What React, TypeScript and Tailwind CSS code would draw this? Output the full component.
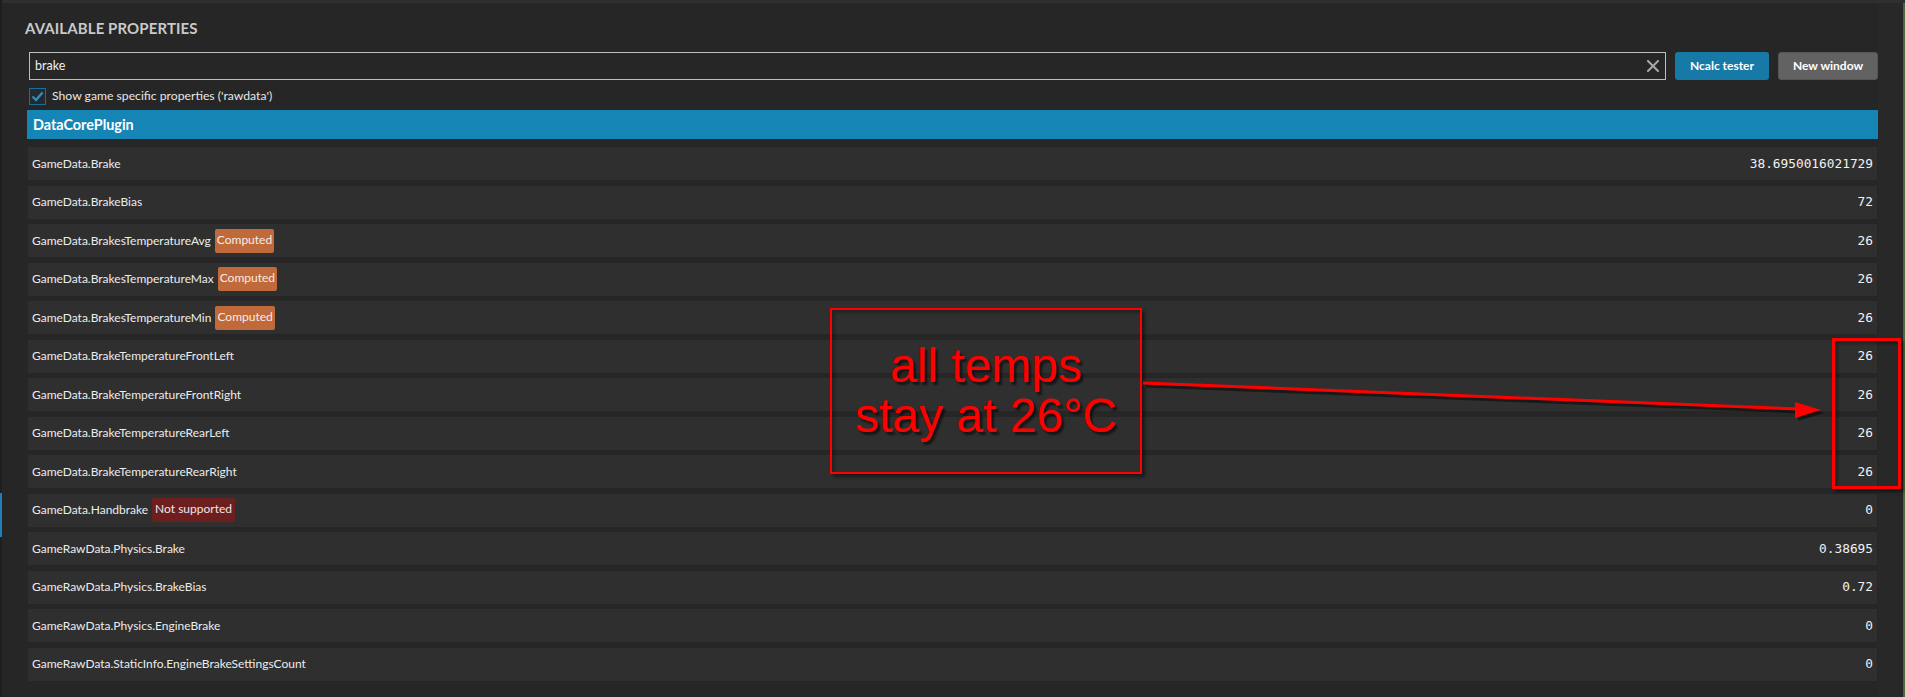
import React from "react";

type Row = { name: string; value: string; badge?: "computed" | "ns" };

const rows: Row[] = [
  { name: "GameData.Brake", value: "38.6950016021729" },
  { name: "GameData.BrakeBias", value: "72" },
  { name: "GameData.BrakesTemperatureAvg", value: "26", badge: "computed" },
  { name: "GameData.BrakesTemperatureMax", value: "26", badge: "computed" },
  { name: "GameData.BrakesTemperatureMin", value: "26", badge: "computed" },
  { name: "GameData.BrakeTemperatureFrontLeft", value: "26" },
  { name: "GameData.BrakeTemperatureFrontRight", value: "26" },
  { name: "GameData.BrakeTemperatureRearLeft", value: "26" },
  { name: "GameData.BrakeTemperatureRearRight", value: "26" },
  { name: "GameData.Handbrake", value: "0", badge: "ns" },
  { name: "GameRawData.Physics.Brake", value: "0.38695" },
  { name: "GameRawData.Physics.BrakeBias", value: "0.72" },
  { name: "GameRawData.Physics.EngineBrake", value: "0" },
  { name: "GameRawData.StaticInfo.EngineBrakeSettingsCount", value: "0" },
];

const sans = { fontFamily: "Lato, 'Open Sans', sans-serif" };

export default function App() {
  return (
    <div className="relative w-[1905px] h-[697px] overflow-hidden bg-[#262626] flex" style={sans}>
      {/* left strip */}
      <div className="w-[2px] h-full shrink-0 bg-[#1e1e1e] flex flex-col">
        <div className="h-[493px]" />
        <div className="h-[44px] bg-[#1f7fb8]" />
      </div>

      <div className="flex-1 flex flex-col">
        <div className="h-[3px] bg-[#2f2f2f]" />
        <div className="flex-1 flex">
          {/* main */}
          <div className="w-[1876px] shrink-0 pl-[23px] flex flex-col">
            <div className="pt-[15px] leading-[20px] text-[15px] font-bold text-[#c9c9c9] tracking-[0.1px]">
              AVAILABLE PROPERTIES
            </div>

            <div className="mt-[14px] ml-[4px] flex items-center gap-[9px] h-[28px]">
              <div className="flex-1 h-[28px] border border-[#bdbdbd] bg-[#262626] flex items-center pl-[5px] pr-[5px]">
                <span className="flex-1 text-[12.5px] text-[#f0f0f0]">brake</span>
                <svg width="12" height="12" viewBox="0 0 12 12" className="mr-[1px]">
                  <path d="M1 1 L11 11 M11 1 L1 11" stroke="#a8a8a8" strokeWidth="2" strokeLinecap="square" />
                </svg>
              </div>
              <button className="w-[94px] h-[28px] rounded-[3px] bg-[#177aa6] text-white text-[12px] font-bold">
                Ncalc tester
              </button>
              <button className="w-[100px] h-[28px] rounded-[3px] bg-[#626262] border border-[#555] text-white text-[12px] font-bold">
                New window
              </button>
            </div>

            <div className="mt-[8px] ml-[4px] flex items-center h-[17px] gap-[6px]">
              <div className="w-[17px] h-[17px] border border-[#1b6e99] bg-[#252a2e] flex items-center justify-center">
                <svg width="13" height="11" viewBox="0 0 13 11">
                  <path d="M1.5 5.5 L5 9 L11.5 1.5" stroke="#2f8cc4" strokeWidth="2.4" fill="none" />
                </svg>
              </div>
              <span className="text-[12.2px] text-[#e6e6e6]">Show game specific properties ('rawdata')</span>
            </div>

            <div className="mt-[5px] ml-[2px] h-[29px] bg-[#1585b5] flex items-center pl-[6px] text-[14.4px] font-bold text-white">
              DataCorePlugin
            </div>

            <div className="mt-[8px] ml-[3px] mr-[1px] flex flex-col gap-[5.5px]">
              {rows.map((r) => (
                <div key={r.name} className="h-[33px] bg-[#2f2f2f] flex items-center pl-[4px] pr-[4px]">
                  <span className="text-[12px] text-[#ececec]">{r.name}</span>
                  {r.badge === "computed" && (
                    <span className="ml-[4px] h-[24px] px-[2px] pt-[2px] rounded-[2px] bg-[#c0693a] text-[12px] text-[#f5ece4] leading-[18px]">
                      Computed
                    </span>
                  )}
                  {r.badge === "ns" && (
                    <span className="ml-[4px] h-[24px] px-[3px] pt-[2px] rounded-[2px] bg-[#6d1f1f] text-[12px] text-[#f0e4e4] leading-[18px]">
                      Not supported
                    </span>
                  )}
                  <span
                    className="ml-auto text-[13px] text-[#f2f2f2]"
                    style={{ fontFamily: "'DejaVu Sans Mono', 'Liberation Mono', monospace", fontSize: "12.8px" }}
                  >
                    {r.value}
                  </span>
                </div>
              ))}
            </div>
          </div>
          {/* right gutter */}
          <div className="flex-1 bg-[#282828]" />
          <div className="w-[1px] bg-[#1c6c9a]" />
          <div className="w-[1px] bg-[#4d6b3a]" />
        </div>
      </div>

      {/* annotation overlay */}
      <div
        className="absolute left-[830px] top-[308px] w-[312px] h-[166px] border-2 border-[#ff0000] flex flex-col items-center justify-center"
        style={{ boxShadow: "3px 3px 3px rgba(0,0,0,0.45), inset 3px 3px 3px rgba(0,0,0,0.25)" }}
      >
        <div
          className="text-[48px] leading-[50px] text-[#ff0000] text-center"
          style={{ fontFamily: "'Liberation Sans', Arial, sans-serif", textShadow: "3px 3px 2px rgba(0,0,0,0.55)" }}
        >
          all temps
          <br />
          stay at 26°C
        </div>
      </div>
      <div
        className="absolute left-[1832px] top-[338px] w-[69px] h-[151px] border-[3px] border-[#ff0000]"
        style={{ boxShadow: "3px 3px 3px rgba(0,0,0,0.45), inset 3px 3px 3px rgba(0,0,0,0.3)" }}
      />
      <svg className="absolute left-0 top-0 pointer-events-none" width="1905" height="697">
        <g transform="translate(3,3)" opacity="0.45">
          <line x1="1143" y1="383" x2="1800" y2="409" stroke="#000" strokeWidth="3" />
          <polygon points="1795,402 1821,410 1795,418" fill="#000" />
        </g>
        <line x1="1143" y1="383" x2="1800" y2="409" stroke="#ff0000" strokeWidth="3" />
        <polygon points="1795,402 1821,410 1795,418" fill="#ff0000" />
      </svg>
    </div>
  );
}
